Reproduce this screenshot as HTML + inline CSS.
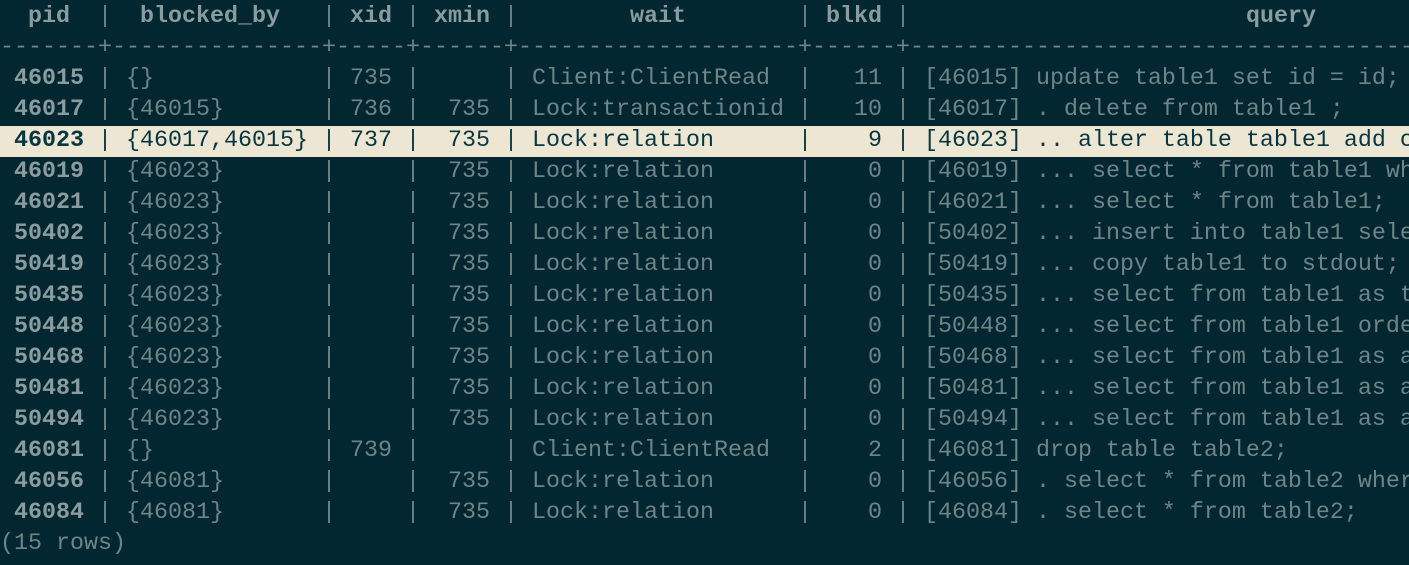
<!DOCTYPE html>
<html><head><meta charset="utf-8"><style>
html,body{margin:0;padding:0;background:#022731;width:1409px;height:565px;overflow:hidden}
pre{margin:0;padding-top:2px;font-family:"Liberation Mono",monospace;font-size:23.33px;line-height:31px;color:#6f8489;white-space:pre}
.l{height:31px;overflow:hidden}
b{color:#8a9c9e;font-weight:bold}
.h{color:#8a9c9e;font-weight:bold}
.h i{font-style:normal;font-weight:normal;color:#6f8489}
.hl{background:#ece6d2;color:#073642}
.hl b{color:#073642}
</style></head><body><pre><div class="l h">  pid  <i>|</i>  blocked_by   <i>|</i> xid <i>|</i> xmin <i>|</i>        wait        <i>|</i> blkd <i>|</i>                        query</div><div class="l">-------+---------------+-----+------+--------------------+------+----------------------------------------</div><div class="l"><b> 46015 </b>| {}            | 735 |      | Client:ClientRead  |   11 | [46015] update table1 set id = id;</div><div class="l"><b> 46017 </b>| {46015}       | 736 |  735 | Lock:transactionid |   10 | [46017] . delete from table1 ;</div><div class="l hl"><b> 46023 </b>| {46017,46015} | 737 |  735 | Lock:relation      |    9 | [46023] .. alter table table1 add column</div><div class="l"><b> 46019 </b>| {46023}       |     |  735 | Lock:relation      |    0 | [46019] ... select * from table1 where</div><div class="l"><b> 46021 </b>| {46023}       |     |  735 | Lock:relation      |    0 | [46021] ... select * from table1;</div><div class="l"><b> 50402 </b>| {46023}       |     |  735 | Lock:relation      |    0 | [50402] ... insert into table1 select</div><div class="l"><b> 50419 </b>| {46023}       |     |  735 | Lock:relation      |    0 | [50419] ... copy table1 to stdout;</div><div class="l"><b> 50435 </b>| {46023}       |     |  735 | Lock:relation      |    0 | [50435] ... select from table1 as t</div><div class="l"><b> 50448 </b>| {46023}       |     |  735 | Lock:relation      |    0 | [50448] ... select from table1 order</div><div class="l"><b> 50468 </b>| {46023}       |     |  735 | Lock:relation      |    0 | [50468] ... select from table1 as a</div><div class="l"><b> 50481 </b>| {46023}       |     |  735 | Lock:relation      |    0 | [50481] ... select from table1 as a</div><div class="l"><b> 50494 </b>| {46023}       |     |  735 | Lock:relation      |    0 | [50494] ... select from table1 as a</div><div class="l"><b> 46081 </b>| {}            | 739 |      | Client:ClientRead  |    2 | [46081] drop table table2;</div><div class="l"><b> 46056 </b>| {46081}       |     |  735 | Lock:relation      |    0 | [46056] . select * from table2 where</div><div class="l"><b> 46084 </b>| {46081}       |     |  735 | Lock:relation      |    0 | [46084] . select * from table2;</div><div class="l">(15 rows)</div></pre></body></html>
